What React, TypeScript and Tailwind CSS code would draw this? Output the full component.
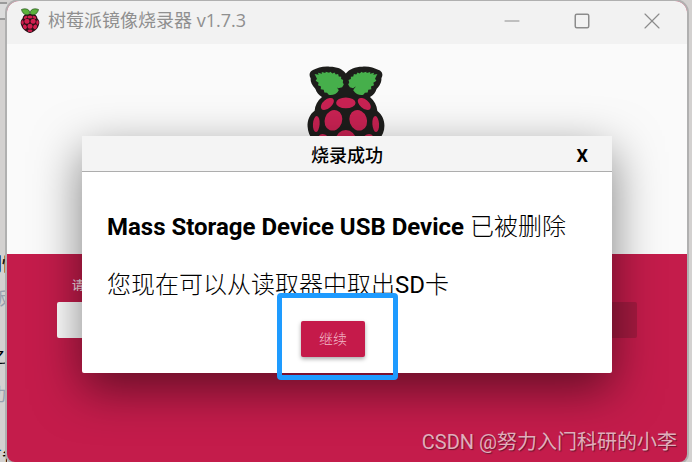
import { Minus, Square, X } from 'lucide-react'

type LogoProps = {
  className?: string
}

const berries = [
  { cx: 168, cy: 158, rx: 29, ry: 16, rotate: 0 },
  { cx: 113, cy: 161, rx: 23, ry: 13, rotate: -40 },
  { cx: 223, cy: 161, rx: 23, ry: 13, rotate: 40 },
  { cx: 131, cy: 210, rx: 26, ry: 31, rotate: 20 },
  { cx: 205, cy: 210, rx: 26, ry: 31, rotate: -20 },
  { cx: 80, cy: 221, rx: 10, ry: 24, rotate: 4 },
  { cx: 257, cy: 221, rx: 10, ry: 24, rotate: -4 },
  { cx: 168, cy: 268, rx: 30, ry: 29, rotate: 0 },
  { cx: 105, cy: 277, rx: 19, ry: 28, rotate: -28 },
  { cx: 231, cy: 277, rx: 19, ry: 28, rotate: 28 },
  { cx: 168, cy: 318, rx: 25, ry: 13, rotate: 0 },
]

function RaspberryLogo({ className }: LogoProps) {
  return (
    <svg className={className} viewBox="53 48 231 292" aria-hidden="true">
      <path
        fill="#1d1d1b"
        d="M168 70C157 56 142 50 120 50C99 48 83 54 70 60C59 65 58 75 63 84C62 96 68 107 77 116C81 128 88 136 97 140C83 152 76 165 75 181C60 192 53 209 54 228C55 243 60 257 69 266C74 289 91 308 112 317C130 332 148 339 168 340C188 339 206 332 224 317C245 308 262 289 267 266C277 256 283 242 283 226C283 208 276 193 262 182C260 164 253 151 240 140C250 136 256 128 260 116C269 108 275 96 274 84C280 75 277 64 266 60C252 54 237 48 217 50C195 50 179 57 168 70Z"
      />
      <path
        fill="#46af4b"
        d="M75 72L87 74L85 68L97 71L96 66L107 69L108 65L118 68L122 65L128 70L134 67L138 73L145 72L147 79L154 80L154 87L160 90L159 97L162 103L157 111L145 114C137 110 125 98 97 80C122 90 138 105 147 120C141 132 128 136 117 134L112 128L104 127L102 119L93 117L94 109L85 105L87 98L78 92L82 86Z"
      />
      <path
        fill="#46af4b"
        d="M262 72L250 74L252 68L240 71L241 66L230 69L229 65L219 68L215 65L209 70L203 67L199 73L192 72L190 79L183 80L183 87L176 90L178 97L175 103L180 111L190 114C200 108 212 98 240 80C215 90 199 105 190 120C198 132 209 136 220 134L225 128L233 127L235 119L244 117L243 109L252 105L250 98L259 92L255 86Z"
      />
      <g fill="#c92253">
        {berries.map((b, idx) => (
          <ellipse
            key={idx}
            cx={b.cx}
            cy={b.cy}
            rx={b.rx}
            ry={b.ry}
            transform={`rotate(${b.rotate} ${b.cx} ${b.cy})`}
          />
        ))}
      </g>
    </svg>
  )
}

// Simplified logo with thinner outlines for the title bar
function SmallLogo({ className }: LogoProps) {
  return (
    <svg className={className} viewBox="0 0 20 25" aria-hidden="true">
      <path fill="#2c1017" d="M10 6C14 5 17 7 17.500 10.500C19.500 12 20 15 18.500 18C17 22 13 24.500 10 25C7 24.500 3 22 1.500 18C0 15 .5 12 2.500 10.500C3 7 6 5 10 6Z" />
      <path fill="#5bb13b" stroke="#234d1b" strokeWidth=".7" d="M1.500 1.500C5 .2 9 .6 9.800 4.500C9.500 6.500 8 7 6 6.800C3.500 6.200 2 4 1.500 1.500ZM18.500 1.500C15 .2 11 .6 10.200 4.500C10.500 6.500 12 7 14 6.800C16.500 6.200 18 4 18.500 1.500Z" />
      <g fill="#d21f4f">
        <ellipse cx="10" cy="9" rx="2.600" ry="1.600" />
        <ellipse cx="5.600" cy="9.300" rx="2" ry="1.300" transform="rotate(-35 5.600 9.300)" />
        <ellipse cx="14.400" cy="9.300" rx="2" ry="1.300" transform="rotate(35 14.400 9.300)" />
        <circle cx="6.900" cy="13.200" r="2.500" />
        <circle cx="13.100" cy="13.200" r="2.500" />
        <ellipse cx="2.500" cy="14.500" rx="1.200" ry="2.200" />
        <ellipse cx="17.500" cy="14.500" rx="1.200" ry="2.200" />
        <circle cx="10" cy="18.300" r="2.500" />
        <ellipse cx="4.900" cy="18.800" rx="1.900" ry="2.400" transform="rotate(-25 4.900 18.800)" />
        <ellipse cx="15.100" cy="18.800" rx="1.900" ry="2.400" transform="rotate(25 15.100 18.800)" />
        <ellipse cx="10" cy="22.800" rx="2.400" ry="1.300" />
      </g>
    </svg>
  )
}

function TitleBar() {
  return (
    <header className="flex h-[43px] shrink-0 items-center bg-[#f2f2f2] pb-1 pl-[13px]">
      <SmallLogo className="h-[25px] w-5" />
      <h1 className="ml-2 flex-1 font-['Open_Sans','Noto_Sans_CJK_SC',sans-serif] text-[18px] text-[#8f8f8f]">
        树莓派镜像烧录器 v1.7.3
      </h1>
      <div className="flex items-center text-[#8c8c8c]">
        <button type="button" aria-label="最小化" className="flex w-[70px] justify-center">
          <Minus className="size-6" strokeWidth={1} />
        </button>
        <button type="button" aria-label="最大化" className="flex w-[70px] justify-center">
          <Square className="size-[18px]" strokeWidth={2} />
        </button>
        <button type="button" aria-label="关闭" className="flex w-[70px] justify-center">
          <X className="size-7" strokeWidth={1} />
        </button>
      </div>
    </header>
  )
}

function SuccessDialog() {
  return (
    <section
      role="dialog"
      aria-labelledby="dialog-title"
      className="absolute inset-x-[75px] top-[92px] rounded-b-xs bg-white shadow-[0_16px_48px_rgba(0,0,0,0.5)]"
    >
      <header className="relative flex h-9 items-center justify-center border-b border-[#adadad] bg-[#f4f4f4] pt-1 text-black">
        <h2 id="dialog-title" className="text-[18px] font-medium">
          烧录成功
        </h2>
        <button type="button" className="absolute right-6 text-[18px] font-bold">
          X
        </button>
      </header>
      <div className="px-[25px] pt-[41px] pb-4 text-2xl leading-[29px] font-light text-black">
        <p>
          <strong className="font-bold">Mass Storage Device USB Device</strong> 已被删除
        </p>
        <p className="mt-[29px]">
          您现在可以从读取器中取出<span className="font-normal">SD</span>卡
        </p>
        <div className="mt-[21px] flex justify-center pr-[28px]">
          <button
            type="button"
            className="h-9 w-16 rounded-xs bg-[#c51a4a] text-sm text-[#f2b9c8] shadow-[0_2px_4px_rgba(0,0,0,0.35)]"
          >
            继续
          </button>
        </div>
      </div>
      {/* Highlight around the continue button */}
      <div className="pointer-events-none absolute bottom-[-7px] left-[195px] h-[87px] w-[121px] rounded-sm border-[5px] border-[#1e9bff]" />
    </section>
  )
}

function ImagerWindow() {
  return (
    <main className="mt-px flex min-w-0 flex-1 flex-col overflow-hidden rounded-t-xl rounded-b-lg bg-[#c41c4b] shadow-[0_0_0_2px_#b0b0b0]">
      <TitleBar />
      <div className="relative flex-1">
        <div className="flex h-[210px] justify-center bg-[#fafafa] pt-[22px] pr-0.5">
          <RaspberryLogo className="h-[98px] w-[78px]" />
        </div>
        <div className="flex items-end justify-between px-[50px] pt-6">
          <div className="flex w-[170px] flex-col gap-2">
            <label htmlFor="os" className="pl-[15px] text-xs leading-4 font-medium text-[#f6dbe2]">
              请
            </label>
            <button id="os" type="button" className="h-9 rounded-xs bg-white" />
          </div>
          <button type="button" aria-label="烧录" disabled className="h-9 w-[110px] rounded-xs bg-[#a51a40]" />
        </div>
        <SuccessDialog />
      </div>
    </main>
  )
}

export default function App() {
  return (
    <div className="relative flex h-screen overflow-hidden bg-[#d3d1d0] font-[Roboto,'Noto_Sans_CJK_SC',sans-serif]">
      {/* Page behind the window */}
      <aside className="w-[7px] shrink-0 overflow-hidden text-lg leading-[30px] whitespace-nowrap text-black">
        <div className="mt-0.5 h-[18px] border-y-2 border-[#9a9a9a] bg-[#dcdcdc]" />
        <p className="-ml-4 mt-[230px] font-medium">则情</p>
        <p className="-ml-2 mt-1 text-gray-400">饭</p>
        <p className="-ml-3 mt-7">之</p>
        <p className="-ml-3 mt-2 text-gray-400">功</p>
        <p className="-ml-4 mt-8">
          <span className="text-[#0a5aa8]">有</span>省
        </p>
      </aside>
      <ImagerWindow />
      <aside className="w-[5px] shrink-0" />
      <p className="absolute right-[15px] bottom-[6px] text-xl text-[#e0aebb] [text-shadow:1px_1px_1px_#6b1530]">
        CSDN @努力入门科研的小李
      </p>
    </div>
  )
}
